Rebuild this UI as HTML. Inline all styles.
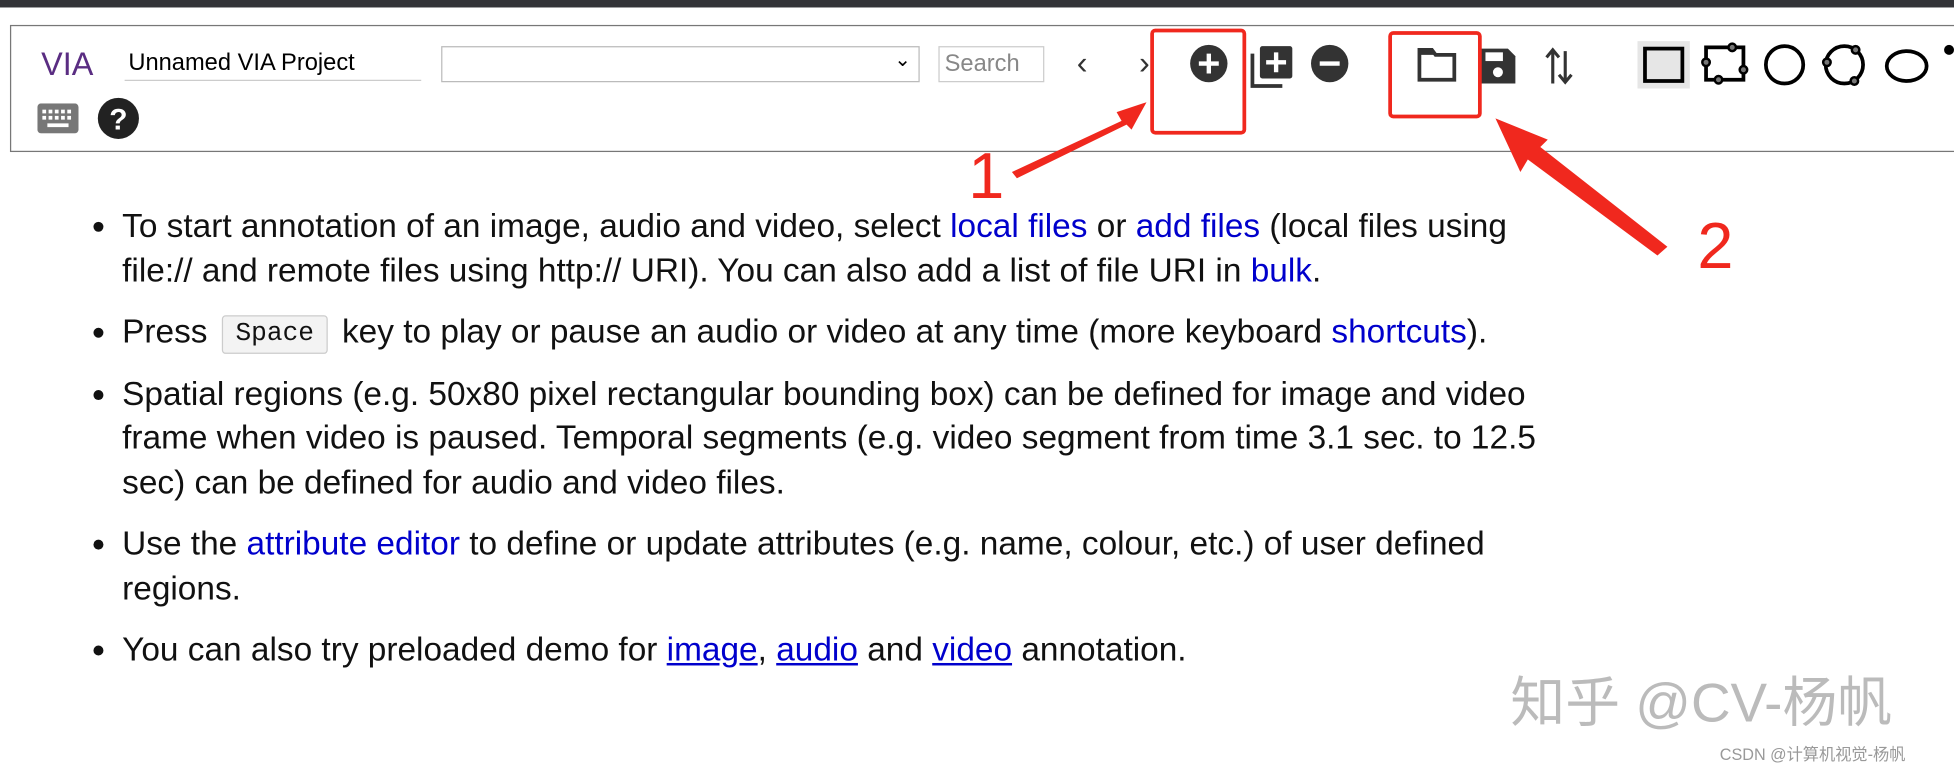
<!DOCTYPE html>
<html><head><meta charset="utf-8"><style>
html,body{margin:0;padding:0;background:#fff;width:1954px;height:772px;overflow:hidden}
#w{position:absolute;left:0;top:0;width:1568px;height:619px;transform:scale(1.2462);transform-origin:0 0;font-family:"Liberation Sans",Arial,sans-serif}
.a{position:absolute}
.bar{left:0;top:0;width:1568px;height:6px;background:#333438}
.tb{left:8px;top:20px;width:1570px;height:102px;border:1.5px solid #777;box-sizing:border-box}
ul{position:absolute;left:58px;top:164px;margin:0;padding:0 0 0 40px;width:1150px;font-size:26.8px;line-height:35.5px;color:#111}
li{margin-bottom:14px}
a{color:#00c;text-decoration:none}
a.u{text-decoration:underline}
.kbd{font-family:"Liberation Mono",monospace;font-size:21px;line-height:21px;display:inline-block;vertical-align:2px;border:1px solid #ccc;background:#f3f3f3;border-radius:3px;padding:4px 10px;margin:0 4px}
svg{position:absolute}
</style></head><body><div id="w">
<div class="a bar"></div>
<div class="a tb"></div>
<div class="a" style="left:33px;top:36px;font-size:26px;color:#5a2d82">VIA</div>
<div class="a" style="left:100px;top:37px;width:238px;height:28px;border-bottom:1px solid #ccc;font-size:19px;line-height:28px;padding-left:3px;box-sizing:border-box">Unnamed VIA Project</div>
<div class="a" style="left:354px;top:37px;width:384px;height:29px;border:1px solid #bbb;box-sizing:border-box"><span class="a" style="right:6px;top:0;font-size:16px">&#8964;</span></div>
<div class="a" style="left:753px;top:37px;width:85px;height:29px;border:1px solid #ccc;box-sizing:border-box;color:#888;font-size:19px;line-height:27px;padding-left:4px">Search</div>
<div class="a" style="left:864px;top:35px;font-size:26px;color:#333">&#8249;</div>
<div class="a" style="left:914px;top:35px;font-size:26px;color:#333">&#8250;</div>
<svg style="left:954px;top:35px" width="32" height="32" viewBox="0 0 32 32"><circle cx="16" cy="16" r="15" fill="#333"/><path d="M16 8v16M8 16h16" stroke="#fff" stroke-width="3.5"/></svg>
<svg style="left:1002px;top:35px" width="36" height="36" viewBox="0 0 36 36"><path d="M3 8v26h24" stroke="#333" stroke-width="3" fill="none"/><rect x="9" y="2" width="26" height="26" rx="2" fill="#333"/><path d="M22 7v16M14 15h16" stroke="#fff" stroke-width="3.5"/></svg>
<svg style="left:1051px;top:35px" width="32" height="32" viewBox="0 0 32 32"><circle cx="16" cy="16" r="15" fill="#333"/><path d="M8 16h16" stroke="#fff" stroke-width="3.5"/></svg>
<svg style="left:1137px;top:38px" width="32" height="28" viewBox="0 0 32 28"><path d="M2 2h10l3 4h15v20H2z" fill="none" stroke="#333" stroke-width="3"/><path d="M2 2h10l3 4H2z" fill="#333"/></svg>
<svg style="left:1187px;top:38px" width="30" height="30" viewBox="0 0 30 30"><path d="M1 1h22l6 6v22H1z" fill="#333"/><rect x="5" y="4" width="14" height="7" fill="#fff"/><circle cx="15" cy="20" r="4" fill="#fff"/></svg>
<svg style="left:1238px;top:37px" width="26" height="32" viewBox="0 0 26 32"><path d="M8 30V4M3 9l5-6 5 6M18 4v24M13 23l5 6 5-6" stroke="#333" stroke-width="2.5" fill="none"/></svg>
<div class="a" style="left:1314px;top:33px;width:42px;height:38px;background:#e6e6e6"></div>
<svg style="left:1318px;top:36px" width="34" height="32" viewBox="0 0 34 32"><rect x="2" y="3" width="30" height="26" fill="#e6e6e6" stroke="#000" stroke-width="3"/></svg>
<svg style="left:1364px;top:32px" width="40" height="38" viewBox="0 0 40 38"><rect x="5" y="6" width="30" height="26" fill="none" stroke="#000" stroke-width="3"/><g fill="#777" stroke="#000" stroke-width="2"><circle cx="26" cy="6" r="3"/><circle cx="5" cy="18" r="3"/><circle cx="35" cy="24" r="3"/><circle cx="15" cy="32" r="3"/></g></svg>
<svg style="left:1414px;top:34px" width="36" height="36" viewBox="0 0 36 36"><circle cx="18" cy="18" r="15" fill="none" stroke="#000" stroke-width="3"/></svg>
<svg style="left:1460px;top:32px" width="40" height="40" viewBox="0 0 40 40"><circle cx="20" cy="20" r="15" fill="none" stroke="#000" stroke-width="3"/><g fill="#777" stroke="#000" stroke-width="2"><circle cx="29" cy="8" r="3"/><circle cx="6" cy="18" r="3"/><circle cx="28" cy="33" r="3"/></g></svg>
<svg style="left:1511px;top:38px" width="38" height="30" viewBox="0 0 38 30"><ellipse cx="19" cy="15" rx="16" ry="12" fill="none" stroke="#000" stroke-width="3"/></svg>
<div class="a" style="left:1560px;top:36px;width:8px;height:8px;border-radius:4px;background:#000"></div>
<svg style="left:30px;top:83px" width="33" height="24" viewBox="0 0 33 24"><rect x="0" y="0" width="33" height="24" rx="3" fill="#777"/><g fill="#fff"><rect x="4" y="5" width="3" height="3"/><rect x="9" y="5" width="3" height="3"/><rect x="14" y="5" width="3" height="3"/><rect x="19" y="5" width="3" height="3"/><rect x="24" y="5" width="3" height="3"/><rect x="4" y="10" width="3" height="3"/><rect x="9" y="10" width="3" height="3"/><rect x="14" y="10" width="3" height="3"/><rect x="19" y="10" width="3" height="3"/><rect x="24" y="10" width="3" height="3"/><rect x="8" y="16" width="17" height="3"/></g></svg>
<svg style="left:78px;top:78px" width="34" height="34" viewBox="0 0 34 34"><circle cx="17" cy="17" r="16.5" fill="#222"/><text x="17" y="26" font-family="Liberation Sans" font-weight="bold" font-size="24" fill="#fff" text-anchor="middle">?</text></svg>
<div class="a" style="left:923px;top:23px;width:77px;height:85px;border:3px solid #f0281e;border-radius:4px;box-sizing:border-box"></div>
<div class="a" style="left:1114px;top:25px;width:75px;height:70px;border:3px solid #f0281e;border-radius:4px;box-sizing:border-box"></div>
<svg style="left:0;top:0" width="1568" height="619" viewBox="0 0 1568 619"><g fill="#f0281e"><polygon points="812,138 900,97 896,90 920,82 908,104 904,100 816,143"/><polygon points="1338,198 1236,118 1242,112 1200,95 1220,138 1226,128 1330,205"/></g></svg>
<div class="a" style="left:777px;top:112px;font-size:52px;color:#f0281e">1</div>
<div class="a" style="left:1362px;top:168px;font-size:52px;color:#f0281e">2</div>
<ul>
<li>To start annotation of an image, audio and video, select <a>local files</a> or <a>add files</a> (local files using file:// and remote files using http:// URI). You can also add a list of file URI in <a>bulk</a>.</li>
<li>Press <span class="kbd">Space</span> key to play or pause an audio or video at any time (more keyboard <a>shortcuts</a>).</li>
<li>Spatial regions (e.g. 50x80 pixel rectangular bounding box) can be defined for image and video frame when video is paused. Temporal segments (e.g. video segment from time 3.1 sec. to 12.5 sec) can be defined for audio and video files.</li>
<li>Use the <a>attribute editor</a> to define or update attributes (e.g. name, colour, etc.) of user defined regions.</li>
<li>You can also try preloaded demo for <a class="u">image</a>, <a class="u">audio</a> and <a class="u">video</a> annotation.</li>
</ul>
<div class="a" style="left:1212px;top:528px;font-size:44px;color:#bbb;font-family:'Liberation Sans','Noto Sans CJK SC',sans-serif;white-space:nowrap">知乎 @CV-杨帆</div>
<div class="a" style="left:1380px;top:595px;font-size:13px;color:#999;font-family:'Liberation Sans','Noto Sans CJK SC',sans-serif;white-space:nowrap">CSDN @计算机视觉-杨帆</div>
</div></body></html>
